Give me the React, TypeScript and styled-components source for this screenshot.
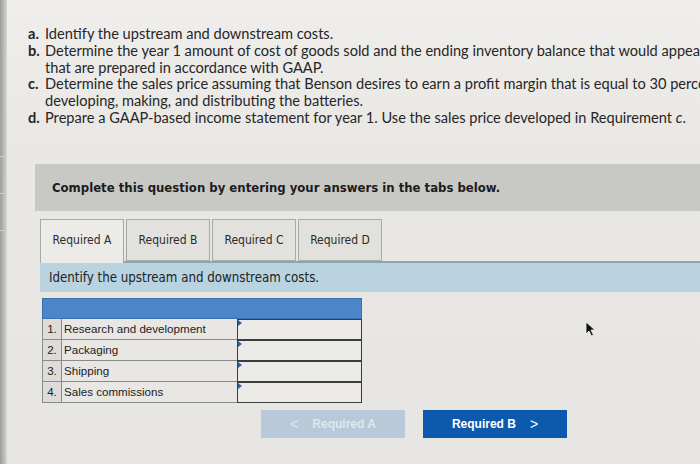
import React from "react";
import styled, { createGlobalStyle } from "styled-components";

const Global = createGlobalStyle`
  html, body { margin: 0; padding: 0; }
  body {
    width: 700px;
    height: 464px;
    overflow: hidden;
    background: #e7e6e2;
  }
  #root { height: 100%; }
`;

const Screen = styled.div`
  display: flex;
  width: 700px;
  height: 464px;
  background: linear-gradient(180deg, #efeeec 0%, #e9e8e4 30%, #e6e5e1 100%);
  overflow: hidden;
  position: relative;
`;

const Rail = styled.div`
  width: 7px;
  flex: none;
  background: linear-gradient(90deg, #9c9c9a 0%, #bdbdbb 60%, #d8d8d6 100%);
  display: flex;
  flex-direction: column;
  padding-top: 156px;
`;

const RailBox = styled.div`
  height: 36px;
  border-top: 1px solid #cdcdcb;
`;

const Content = styled.div`
  flex: 1;
  min-width: 0;
  display: flex;
  flex-direction: column;
  padding-top: 26px;
`;

const Instructions = styled.div`
  margin-left: 21px;
  display: flex;
  flex-direction: column;
  font-family: Lato, "Open Sans", sans-serif;
  font-size: 14.6px;
  line-height: 16.8px;
  color: #262626;
`;

const Item = styled.div`
  display: grid;
  grid-template-columns: 17px 1fr;
`;

const Letter = styled.span`
  font-weight: 700;
`;

const Lines = styled.div`
  display: flex;
  flex-direction: column;
  min-width: 0;
`;

const Line = styled.span`
  white-space: nowrap;
  overflow: hidden;
`;

const Banner = styled.div`
  margin: 37px 0 0 28px;
  height: 47px;
  background: #c8c8c5;
  display: flex;
  align-items: center;
  padding-left: 17px;
  font-family: "DejaVu Sans Condensed", "DejaVu Sans", sans-serif;
  font-weight: 700;
  font-size: 13px;
  color: #1c1c1c;
  white-space: nowrap;
`;

const TabBar = styled.div`
  margin: 8px 0 0 33px;
  display: flex;
  gap: 2px;
  height: 42px;
  position: relative;
  z-index: 1;
`;

const Tab = styled.div<{ $active?: boolean }>`
  width: 84px;
  box-sizing: border-box;
  height: ${(p) => (p.$active ? "44px" : "42px")};
  border: 1px solid #a9a9a7;
  border-bottom: ${(p) => (p.$active ? "none" : "1px solid #a9a9a7")};
  background: ${(p) => (p.$active ? "#ecebe8" : "#e2e1de")};
  display: flex;
  align-items: center;
  justify-content: center;
  padding-bottom: ${(p) => (p.$active ? "2px" : "0")};
  font-family: "DejaVu Sans Condensed", "DejaVu Sans", sans-serif;
  font-size: 12px;
  color: #2a2a2a;
`;

const Prompt = styled.div`
  margin-left: 33px;
  height: 31px;
  box-sizing: border-box;
  border-top: 2px solid #8da6b3;
  background: #b9d3e1;
  display: flex;
  align-items: center;
  padding-left: 9px;
  font-family: "DejaVu Sans Condensed", "DejaVu Sans", sans-serif;
  font-size: 13.2px;
  color: #222;
`;

const Table = styled.div`
  margin: 6px 0 0 35px;
  width: 320px;
  display: grid;
  grid-template-columns: 19px 176px 125px;
  font-family: "Liberation Sans", Arial, sans-serif;
  font-size: 11.6px;
  color: #222;
`;

const Header = styled.div`
  grid-column: 1 / -1;
  height: 21px;
  background: #4b86c9;
  border: 1px solid #3c70aa;
  box-sizing: border-box;
`;

const Num = styled.div`
  height: 21px;
  box-sizing: border-box;
  border-left: 1px solid #8a8a88;
  border-bottom: 1px solid #8a8a88;
  background: #dddcd9;
  display: flex;
  align-items: center;
  justify-content: center;
`;

const Label = styled.div`
  height: 21px;
  box-sizing: border-box;
  border-left: 1px solid #8a8a88;
  border-bottom: 1px solid #8a8a88;
  background: #e8e7e4;
  display: flex;
  align-items: center;
  padding-left: 2px;
`;

const InputCell = styled.div`
  height: 21px;
  box-sizing: border-box;
  border: 1.5px solid #3b3b3b;
  border-top-width: 1px;
  background: #ebeae7;
  position: relative;
`;

const Flag = styled.span`
  position: absolute;
  left: 0;
  top: 0;
  width: 0;
  height: 0;
  border-top: 3px solid transparent;
  border-bottom: 3px solid transparent;
  border-left: 4px solid #2f5fa8;
`;

const Buttons = styled.div`
  margin: 7px 0 0 254px;
  display: flex;
  gap: 18px;
`;

const NavButton = styled.div<{ $disabled?: boolean }>`
  width: 144px;
  height: 28px;
  display: flex;
  align-items: center;
  justify-content: center;
  gap: 14px;
  background: ${(p) => (p.$disabled ? "#b8cad9" : "#0c59ad")};
  color: ${(p) => (p.$disabled ? "#dfe7ee" : "#ffffff")};
  font-family: "Liberation Sans", Arial, sans-serif;
  font-weight: 700;
  font-size: 12px;
`;

const Chevron = styled.span`
  font-weight: 400;
  font-size: 14px;
`;

const Pointer = styled.svg`
  position: absolute;
  left: 585px;
  top: 321px;
`;

const rows = [
  "Research and development",
  "Packaging",
  "Shipping",
  "Sales commissions",
];

export default function App() {
  return (
    <>
      <Global />
      <Screen>
        <Rail>
          <RailBox />
          <RailBox />
          <RailBox />
        </Rail>
        <Content>
          <Instructions>
            <Item>
              <Letter>a.</Letter>
              <Lines>
                <Line>Identify the upstream and downstream costs.</Line>
              </Lines>
            </Item>
            <Item>
              <Letter>b.</Letter>
              <Lines>
                <Line>
                  Determine the year 1 amount of cost of goods sold and the ending inventory balance that would appear on year 1 pro forma financial statements
                </Line>
                <Line>that are prepared in accordance with GAAP.</Line>
              </Lines>
            </Item>
            <Item>
              <Letter>c.</Letter>
              <Lines>
                <Line>
                  Determine the sales price assuming that Benson desires to earn a profit margin that is equal to 30 percent of the total cost of
                </Line>
                <Line>developing, making, and distributing the batteries.</Line>
              </Lines>
            </Item>
            <Item>
              <Letter>d.</Letter>
              <Lines>
                <Line>
                  Prepare a GAAP-based income statement for year 1. Use the sales price developed in Requirement <i>c</i>.
                </Line>
              </Lines>
            </Item>
          </Instructions>

          <Banner>Complete this question by entering your answers in the tabs below.</Banner>

          <TabBar>
            <Tab $active>Required A</Tab>
            <Tab>Required B</Tab>
            <Tab>Required C</Tab>
            <Tab>Required D</Tab>
          </TabBar>

          <Prompt>Identify the upstream and downstream costs.</Prompt>

          <Table>
            <Header />
            {rows.map((r, i) => (
              <React.Fragment key={r}>
                <Num>{i + 1}.</Num>
                <Label>{r}</Label>
                <InputCell>
                  <Flag />
                </InputCell>
              </React.Fragment>
            ))}
          </Table>

          <Buttons>
            <NavButton $disabled>
              <Chevron>&lt;</Chevron>
              <span>Required A</span>
            </NavButton>
            <NavButton>
              <span>Required B</span>
              <Chevron>&gt;</Chevron>
            </NavButton>
          </Buttons>
        </Content>
        <Pointer width="12" height="16" viewBox="0 0 12 16">
          <path d="M1 1 L1 13 L4 10 L6.5 15 L8.5 14 L6 9 L10 9 Z" fill="#111" stroke="#f4f4f4" strokeWidth="0.8" />
        </Pointer>
      </Screen>
    </>
  );
}
